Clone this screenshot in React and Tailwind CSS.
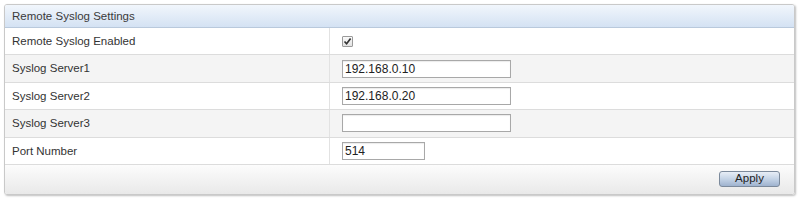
export default function App() {
  const rows = [
    { label: "Remote Syslog Enabled", type: "check", bg: "bg-white" },
    { label: "Syslog Server1", type: "input", value: "192.168.0.10", w: "w-[169px]", bg: "bg-[#f4f4f4]" },
    { label: "Syslog Server2", type: "input", value: "192.168.0.20", w: "w-[169px]", bg: "bg-white" },
    { label: "Syslog Server3", type: "input", value: "", w: "w-[169px]", bg: "bg-[#f4f4f4]" },
    { label: "Port Number", type: "input", value: "514", w: "w-[83px]", bg: "bg-white" },
  ];
  return (
    <div className="w-[800px] h-[201px] bg-white pt-[4px] pl-[4px] font-['Liberation_Sans',Arial,sans-serif] text-[11.5px] text-[#333]">
      <div className="w-[791px] h-[191px] border border-[#c9c9c9] rounded-[3px] shadow-[1px_1px_2px_rgba(0,0,0,0.25)] flex flex-col overflow-hidden">
        <div className="h-[23px] flex items-center pl-[7px] pt-[1px] bg-gradient-to-b from-[#f1f6fc] to-[#d4e2f3] border-b border-[#b9c9dc] text-[#3a3a3a]">
          Remote Syslog Settings
        </div>
        {rows.map((r, i) => (
          <div key={i} className={`h-[27.4px] flex border-b border-[#dcdcdc] ${r.bg}`}>
            <div className="w-[325px] flex items-center pl-[7px] pt-[1px] border-r border-[#e2e2e2]">{r.label}</div>
            <div className="flex items-center pl-[12px]">
              {r.type === "check" ? (
                <div className="w-[11px] h-[11px] border border-[#9a9a9a] rounded-[1px] bg-gradient-to-b from-[#fafafa] to-[#e2e2e2] flex items-center justify-center">
                  <svg width="9" height="9" viewBox="0 0 9 9">
                    <path d="M1.5 4.5 L3.6 6.8 L7.6 1.6" fill="none" stroke="#333" strokeWidth="1.7" />
                  </svg>
                </div>
              ) : (
                <div className={`${r.w} h-[18px] border border-[#a8a8a8] bg-white flex items-center pl-[2px] text-[12px] text-[#222] shadow-[inset_0_1px_1px_rgba(0,0,0,0.08)]`}>
                  {r.value}
                </div>
              )}
            </div>
          </div>
        ))}
        <div className="flex-1 bg-gradient-to-b from-[#fcfcfc] to-[#e9e9e9] flex items-center justify-end pr-[14px]">
          <div className="w-[61px] h-[16px] rounded-[3px] border border-[#7c8a9c] bg-gradient-to-b from-[#e8eef6] via-[#c4d3e6] to-[#9fb3cf] flex items-center justify-center text-[11.5px] text-[#222] mt-[-1px]">
            Apply
          </div>
        </div>
      </div>
    </div>
  );
}
